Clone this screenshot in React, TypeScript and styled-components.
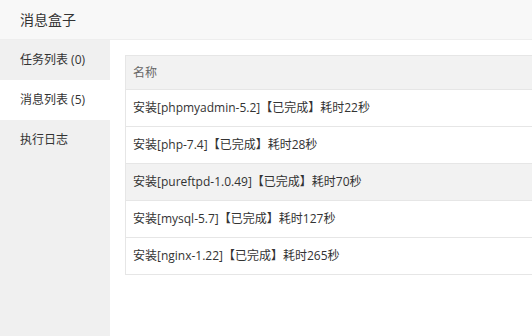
import React from "react";
import styled, { createGlobalStyle } from "styled-components";

const Global = createGlobalStyle`
  html, body { margin: 0; padding: 0; background: #fff; }
  body {
    font-family: "Open Sans", "Noto Sans CJK SC", sans-serif;
    color: #333;
    overflow: hidden;
  }
`;

const Page = styled.div`
  width: 532px;
  height: 336px;
  display: flex;
  flex-direction: column;
  overflow: hidden;
`;

const Header = styled.div`
  height: 39px;
  line-height: 39px;
  padding-left: 20px;
  background: #f8f8f8;
  border-bottom: 1px solid #eeeeee;
  font-size: 14px;
  color: #333;
  flex-shrink: 0;
`;

const Body = styled.div`
  flex: 1;
  display: flex;
  min-height: 0;
`;

const Sidebar = styled.div`
  width: 110px;
  flex-shrink: 0;
  background: #f0f0f0;
  display: flex;
  flex-direction: column;
`;

const NavItem = styled.div<{ $active?: boolean }>`
  height: 40px;
  line-height: 40px;
  padding-left: 20px;
  font-size: 12px;
  color: #333;
  background: ${(p) => (p.$active ? "#fff" : "transparent")};
`;

const Content = styled.div`
  flex: 1;
  padding: 15px 0 0 15px;
  overflow: hidden;
`;

const Table = styled.div`
  width: 620px;
  border: 1px solid #e6e6e6;
  font-size: 12px;
`;

const HeadRow = styled.div`
  height: 33px;
  line-height: 33px;
  padding-left: 7px;
  background: #f2f2f2;
  color: #666;
  border-bottom: 1px solid #e6e6e6;
`;

const Row = styled.div<{ $hover?: boolean }>`
  height: 36px;
  line-height: 36px;
  padding-left: 7px;
  color: #333;
  background: ${(p) => (p.$hover ? "#f2f2f2" : "#fff")};
  border-bottom: 1px solid #e6e6e6;
  &:last-child { border-bottom: none; }
`;

const rows = [
  "安装[phpmyadmin-5.2]【已完成】耗时22秒",
  "安装[php-7.4]【已完成】耗时28秒",
  "安装[pureftpd-1.0.49]【已完成】耗时70秒",
  "安装[mysql-5.7]【已完成】耗时127秒",
  "安装[nginx-1.22]【已完成】耗时265秒",
];

export default function App() {
  return (
    <Page>
      <Global />
      <Header>消息盒子</Header>
      <Body>
        <Sidebar>
          <NavItem>任务列表 (0)</NavItem>
          <NavItem $active>消息列表 (5)</NavItem>
          <NavItem>执行日志</NavItem>
        </Sidebar>
        <Content>
          <Table>
            <HeadRow>名称</HeadRow>
            {rows.map((r, i) => (
              <Row key={i} $hover={i === 2}>
                {r}
              </Row>
            ))}
          </Table>
        </Content>
      </Body>
    </Page>
  );
}
